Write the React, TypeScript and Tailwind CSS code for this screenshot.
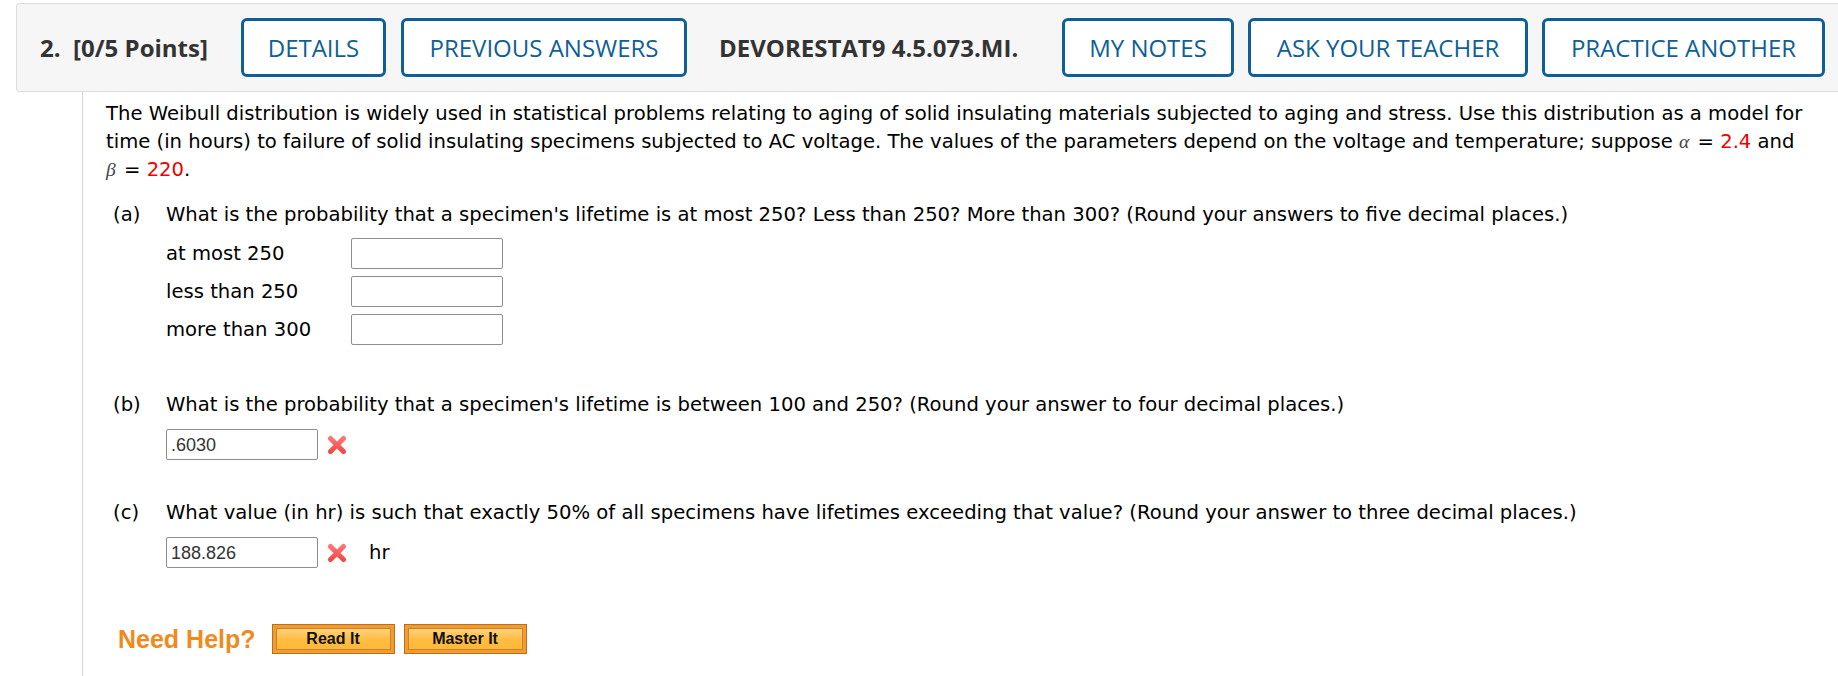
import React from 'react';

const BODY_FONT = { fontFamily: '"DejaVu Sans", Verdana, sans-serif' };

function HeaderButton({ label, width }: { label: string; width: string }) {
  return (
    <div
      className={`${width} h-[59px] flex items-center justify-center border-[3px] border-[#0e5f97] rounded-[6px] bg-white text-[#0e5f97] text-[24px] font-normal`}
    >
      {label}
    </div>
  );
}

function WrongMark() {
  return (
    <svg width="22" height="20" viewBox="0 0 22 20" className="shrink-0">
      <defs>
        <linearGradient id="xg" x1="0" y1="0" x2="0" y2="1">
          <stop offset="0" stopColor="#ff7474" />
          <stop offset="1" stopColor="#f04a4a" />
        </linearGradient>
      </defs>
      <path d="M4.5 3.5 L17.5 16.5 M17.5 3.5 L4.5 16.5" stroke="url(#xg)" strokeWidth="5" strokeLinecap="round" fill="none" />
    </svg>
  );
}

function AnswerBox({ value }: { value?: string }) {
  return (
    <div
      className="w-[152px] h-[31px] border border-[#8e8e8e] rounded-[2px] bg-white flex items-center pl-[4px] text-[18px] text-[#333]"
      style={{ fontFamily: '"Liberation Sans", Arial, sans-serif' }}
    >
      {value}
    </div>
  );
}

function HelpButton({ label }: { label: string }) {
  return (
    <div className="w-[123px] h-[30px] border border-[#b86f22] bg-[#f59a2c] p-[3px]">
      <div
        className="w-full h-full border border-[#c9822e] bg-gradient-to-b from-[#ffd27a] via-[#ffbd44] to-[#ffb838] flex items-center justify-center text-[16px] font-bold text-[#111]"
        style={{ fontFamily: '"Liberation Sans", Arial, sans-serif' }}
      >
        {label}
      </div>
    </div>
  );
}

const greek = { fontFamily: '"Liberation Serif", "Times New Roman", serif' };

export default function App() {
  return (
    <div className="w-[1838px] h-[676px] bg-white overflow-hidden flex flex-col">
      {/* question header bar */}
      <div
        className="ml-[16px] mt-[3px] -mr-[6px] h-[89px] border border-[#dddddd] rounded-[3px] bg-[#f6f6f6] flex items-center pl-[23px] shrink-0 text-[#333]"
        style={{ fontFamily: '"Open Sans", sans-serif' }}
      >
        <span className="w-[201px] text-[24px] font-bold whitespace-pre">2.  [0/5 Points]</span>
        <HeaderButton label="DETAILS" width="w-[145px]" />
        <div className="ml-[15px]">
          <HeaderButton label="PREVIOUS ANSWERS" width="w-[286px]" />
        </div>
        <span className="ml-[32px] w-[343px] text-[24px] font-bold">DEVORESTAT9 4.5.073.MI.</span>
        <HeaderButton label="MY NOTES" width="w-[172px]" />
        <div className="ml-[14px]">
          <HeaderButton label="ASK YOUR TEACHER" width="w-[280px]" />
        </div>
        <div className="ml-[14px]">
          <HeaderButton label="PRACTICE ANOTHER" width="w-[283px]" />
        </div>
      </div>

      {/* question body */}
      <div
        className="ml-[82px] flex-1 border-l border-[#d6d6d6] pl-[23px] pt-[8px] text-[19.6px] leading-[28px] text-black"
        style={BODY_FONT}
      >
        <p className="w-[1720px]">
          The Weibull distribution is widely used in statistical problems relating to aging of solid insulating materials subjected to aging and stress. Use this distribution as a model for time (in hours) to failure of solid insulating specimens subjected to AC voltage. The values of the parameters depend on the voltage and temperature; suppose{' '}
          <span className="italic text-[#444] pr-[2px]" style={greek}>α</span> = <span className="text-[#ee0000]">2.4</span> and
          <br />
          <span className="italic text-[#444] pr-[2px]" style={greek}>β</span> = <span className="text-[#ee0000]">220</span>.
        </p>

        {/* (a) */}
        <div className="mt-[17px] flex">
          <span className="w-[60px] pl-[7px] shrink-0">(a)</span>
          <div className="flex flex-col">
            <span>What is the probability that a specimen's lifetime is at most 250? Less than 250? More than 300? (Round your answers to five decimal places.)</span>
            <div className="mt-[9px] flex flex-col gap-[7px]">
              <div className="flex items-center">
                <span className="w-[185px]">at most 250</span>
                <AnswerBox />
              </div>
              <div className="flex items-center">
                <span className="w-[185px]">less than 250</span>
                <AnswerBox />
              </div>
              <div className="flex items-center">
                <span className="w-[185px]">more than 300</span>
                <AnswerBox />
              </div>
            </div>
          </div>
        </div>

        {/* (b) */}
        <div className="mt-[46px] flex">
          <span className="w-[60px] pl-[7px] shrink-0">(b)</span>
          <div className="flex flex-col">
            <span>What is the probability that a specimen's lifetime is between 100 and 250? (Round your answer to four decimal places.)</span>
            <div className="mt-[10px] flex items-center gap-[8px]">
              <AnswerBox value=".6030" />
              <WrongMark />
            </div>
          </div>
        </div>

        {/* (c) */}
        <div className="mt-[39px] flex">
          <span className="w-[60px] pl-[7px] shrink-0">(c)</span>
          <div className="flex flex-col">
            <span>What value (in hr) is such that exactly 50% of all specimens have lifetimes exceeding that value? (Round your answer to three decimal places.)</span>
            <div className="mt-[10px] flex items-center gap-[8px]">
              <AnswerBox value="188.826" />
              <WrongMark />
              <span className="ml-[13px]">hr</span>
            </div>
          </div>
        </div>

        {/* help */}
        <div className="mt-[56px] ml-[12px] flex items-center">
          <span
            className="text-[25px] font-bold text-[#ef8a1e] mr-[16px]"
            style={{ fontFamily: '"Liberation Sans", Arial, sans-serif' }}
          >
            Need Help?
          </span>
          <HelpButton label="Read It" />
          <div className="ml-[9px]">
            <HelpButton label="Master It" />
          </div>
        </div>
      </div>
    </div>
  );
}
